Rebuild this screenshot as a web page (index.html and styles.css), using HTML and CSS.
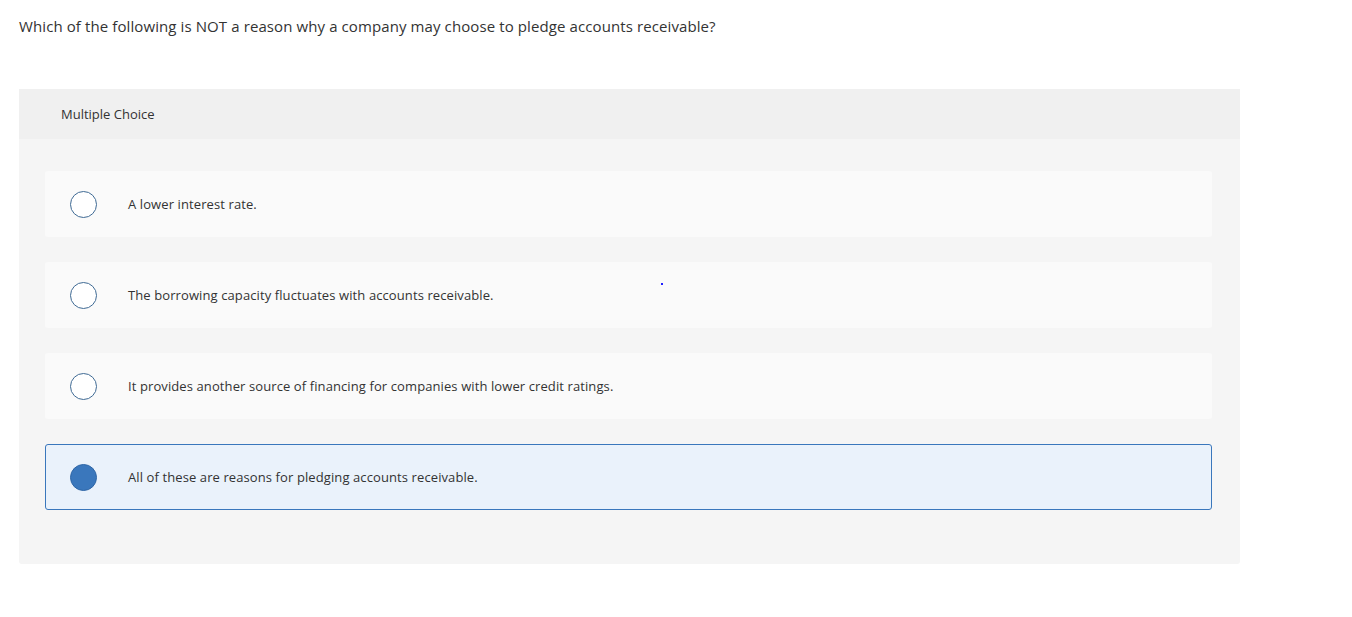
FILE: index.html
```html
<!DOCTYPE html>
<html>
<head>
<meta charset="utf-8">
<link rel="stylesheet" href="styles.css">
</head>
<body>
<div class="page">
  <p class="question">Which of the following is NOT a reason why a company may choose to pledge accounts receivable?</p>
  <div class="panel">
    <div class="panel-head">Multiple Choice</div>
    <div class="panel-body">
      <div class="option"><span class="radio"></span><span class="label">A lower interest rate.</span></div>
      <div class="option"><span class="radio"></span><span class="label">The borrowing capacity fluctuates with accounts receivable.</span><span class="dot"></span></div>
      <div class="option"><span class="radio"></span><span class="label">It provides another source of financing for companies with lower credit ratings.</span></div>
      <div class="option selected"><span class="radio"></span><span class="label">All of these are reasons for pledging accounts receivable.</span></div>
    </div>
  </div>
</div>
</body>
</html>
```
FILE: styles.css
```css
html, body {
  margin: 0;
  padding: 0;
  background: #ffffff;
}
body {
  font-family: "Open Sans", Lato, sans-serif;
  color: #2b2b2b;
}
.page {
  padding: 0 112px 0 19px;
}
.question {
  margin: 0;
  padding-top: 16px;
  font-size: 15px;
  line-height: 20px;
  letter-spacing: 0.1px;
  color: #333333;
}
.panel {
  margin-top: 53px;
  width: 1221px;
  background: #f5f5f5;
  border-radius: 0 0 3px 3px;
}
.panel-head {
  height: 50px;
  background: #f0f0f0;
  padding-left: 42px;
  display: flex;
  align-items: center;
  font-size: 13px;
  color: #333333;
}
.panel-body {
  padding: 32px 28px 54px 26px;
  display: flex;
  flex-direction: column;
  gap: 25px;
}
.option {
  position: relative;
  height: 66px;
  box-sizing: border-box;
  background: #fafafa;
  border-radius: 3px;
  display: flex;
  align-items: center;
  padding-left: 25px;
}
.radio {
  width: 25px;
  height: 25px;
  border: 1px solid #3f6a94;
  border-radius: 50%;
  background: #ffffff;
  flex: none;
}
.label {
  margin-left: 31px;
  font-size: 13px;
  letter-spacing: 0.1px;
  color: #333333;
}
.option.selected {
  background: #eaf2fb;
  border: 1px solid #3a77bc;
  padding-left: 24px;
}
.option.selected .radio {
  background: #3a77bc;
  border-color: #2f66a6;
}
.dot {
  position: absolute;
  left: 616px;
  top: 21px;
  width: 2px;
  height: 2px;
  background: #1f1fff;
}
```
